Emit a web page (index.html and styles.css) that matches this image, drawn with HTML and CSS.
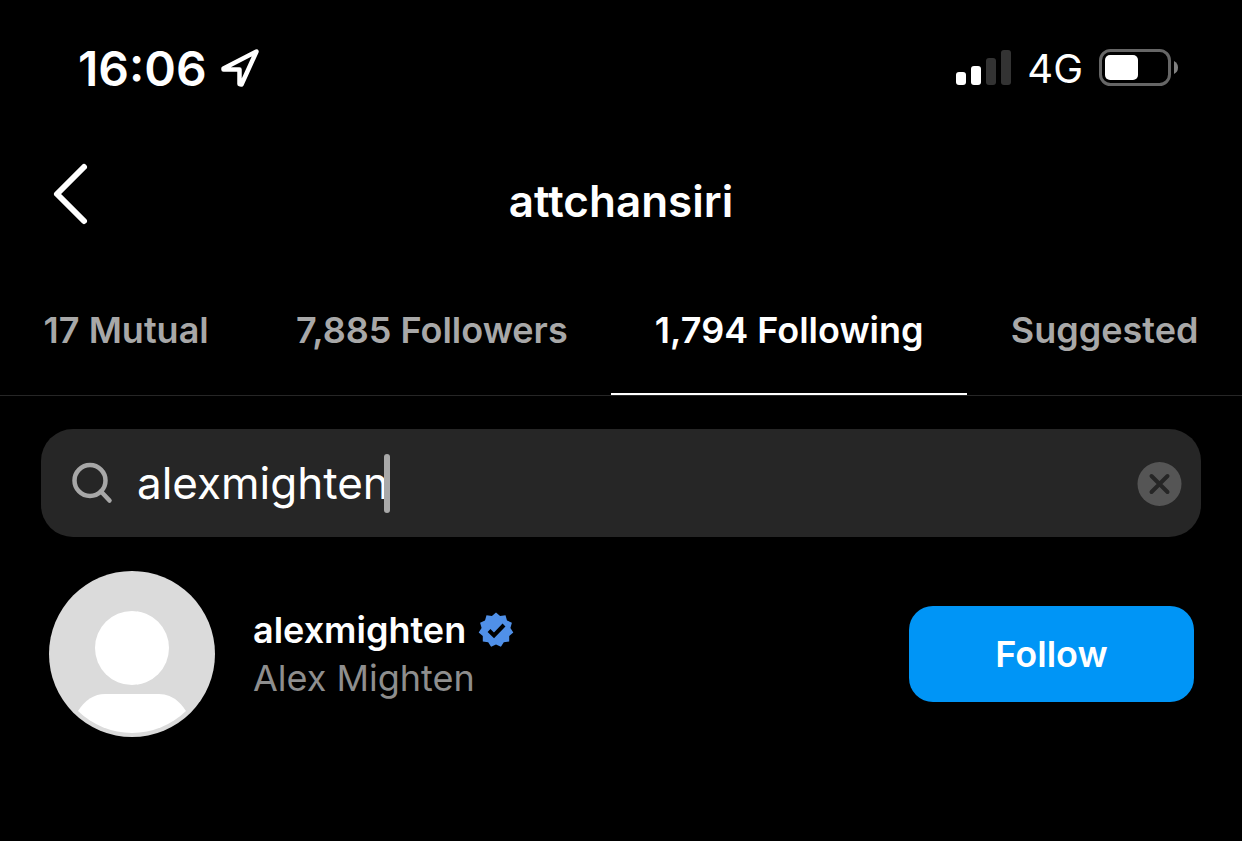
FILE: index.html
```html
<!DOCTYPE html>
<html lang="en">
<head>
    <meta charset="UTF-8">
    <meta name="viewport" content="width=device-width, initial-scale=1.0">
    <title>attchansiri - Following</title>
    <link rel="stylesheet" href="styles.css">
</head>
<body>

<!-- Status bar -->
<div class="status-bar">
    <div class="status-left">
        <span class="time">16:06</span>
        <svg class="location-icon" viewBox="0 0 38 38" aria-hidden="true">
            <path d="M2.5 19.5 35.5 2.5 20.5 35.5 18.5 35 18.5 20.5 2.5 20.5Z"/>
        </svg>
    </div>
    <div class="status-right">
        <svg class="signal-icon" viewBox="0 0 55 36" aria-hidden="true">
            <rect x="0" y="22" width="10" height="13" rx="3"/>
            <rect x="15" y="16" width="10" height="19" rx="3"/>
            <rect class="weak" x="30" y="8" width="10" height="27" rx="3"/>
            <rect class="weak" x="45" y="0" width="10" height="35" rx="3"/>
        </svg>
        <span class="network">4G</span>
        <svg class="battery-icon" viewBox="0 0 80 38" aria-hidden="true">
            <rect class="battery-case" x="1.5" y="1.5" width="69" height="34" rx="10"/>
            <rect x="6" y="6" width="33" height="25" rx="5"/>
            <path class="battery-tip" d="M75 12Q79 14 79 18.500T75 25Z"/>
        </svg>
    </div>
</div>

<!-- Header -->
<header class="header">
    <button class="back-button" type="button" aria-label="Back">
        <svg viewBox="0 0 34 60" aria-hidden="true">
            <path d="M30 3 3 30 30 57"/>
        </svg>
    </button>
    <h1>attchansiri</h1>
</header>

<!-- Tabs -->
<nav class="tabs">
    <a href="#mutual">17 Mutual</a>
    <a href="#followers">7,885 Followers</a>
    <a href="#following" class="active">1,794 Following</a>
    <a href="#suggested">Suggested</a>
</nav>

<main>
    <!-- Search -->
    <form class="search">
        <svg class="search-icon" viewBox="0 0 42 42" aria-hidden="true">
            <circle cx="19" cy="18.500" r="15.500"/>
            <path d="M30 29.500 38.500 38.500"/>
        </svg>
        <div class="search-field">
            <input type="text" value="alexmighten" aria-label="Search" spellcheck="false">
            <span class="caret"></span>
        </div>
        <button class="clear-button" type="button" aria-label="Clear">
            <svg viewBox="0 0 46 46" aria-hidden="true">
                <circle cx="22.500" cy="24" r="22"/>
                <path d="M14.500 16 30.500 32M30.500 16 14.500 32"/>
            </svg>
        </button>
    </form>

    <!-- Results -->
    <ul class="users">
        <li class="user">
            <svg class="avatar" viewBox="0 0 166 166" aria-hidden="true">
                <circle class="avatar-back" cx="83" cy="83" r="83"/>
                <circle cx="83" cy="77" r="37"/>
                <path d="M29 140Q40 123 56 123H110Q126 123 137 140A77.300 77.300 0 0 1 29 140Z"/>
            </svg>
            <div class="user-info">
                <div class="username">
                    <span>alexmighten</span>
                    <svg class="verified-icon" viewBox="0 0 36 36" aria-hidden="true">
                        <path class="badge" d="M18 .5 22.100 4.100 27.500 3.300 29 8.500 33.900 10.700 32.400 15.900 35.300 20.500 31.200 24 31.200 29.500 25.800 30.200 22.900 34.800 18 32.500 13.100 34.800 10.200 30.200 4.800 29.500 4.800 24 .7 20.500 3.600 15.900 2.100 10.700 7 8.500 8.500 3.300 13.900 4.100Z"/>
                        <path class="check" d="M11 18.500 16 23.500 26 13"/>
                    </svg>
                </div>
                <div class="full-name">Alex Mighten</div>
            </div>
            <button class="follow-button" type="button">Follow</button>
        </li>
    </ul>
</main>

</body>
</html>
```
FILE: styles.css
```css
* {
    box-sizing: border-box;
}

body {
    font-family: Inter, "Liberation Sans", sans-serif;
    margin: 0;
    background-color: #000;
    color: #fff;
}

button {
    font-family: inherit;
    border: none;
    padding: 0;
    cursor: pointer;
}

svg {
    display: block;
    flex-shrink: 0;
    fill: #fff;
    overflow: visible;
}

/* Status bar */
.status-bar {
    display: flex;
    justify-content: space-between;
    align-items: center;
    height: 136px;
    padding: 0 63px 0 78px;
}

.status-left,
.status-right {
    display: flex;
    align-items: center;
}

.status-left {
    gap: 14px;
}

.status-right {
    gap: 16px;
}

.time {
    font-size: 48px;
    font-weight: 600;
}

.network {
    font-size: 40px;
}

.location-icon {
    width: 38px;
    height: 38px;
    fill: none;
    stroke: #fff;
    stroke-width: 4.5;
    stroke-linejoin: round;
}

.signal-icon {
    width: 55px;
    height: 36px;
}

.signal-icon .weak {
    fill: #333;
}

.battery-icon {
    width: 80px;
    height: 38px;
}

.battery-icon .battery-case {
    fill: none;
    stroke: #666;
    stroke-width: 3;
}

.battery-icon .battery-tip {
    fill: #808080;
}

/* Header */
.header {
    display: grid;
    grid-template-columns: 1fr auto 1fr;
    align-items: center;
    height: 130px;
    padding: 0 54px;
}

.header h1 {
    margin: 0;
    font-size: 44px;
    font-weight: 600;
}

.back-button {
    justify-self: start;
    align-self: start;
    margin-top: 28px;
    background: none;
}

.back-button svg {
    width: 34px;
    height: 60px;
    fill: none;
    stroke: #fff;
    stroke-width: 6;
    stroke-linecap: round;
    stroke-linejoin: round;
}

/* Tabs */
.tabs {
    display: flex;
    height: 130px;
    border-bottom: 1px solid #262626;
}

.tabs a {
    flex: 1 1 auto;
    line-height: 128px;
    text-align: center;
    color: #a8a8a8;
    font-size: 36px;
    font-weight: 600;
    text-decoration: none;
    white-space: nowrap;
}

.tabs .active {
    color: #fff;
    border-bottom: 2px solid #fff;
}

/* Search */
.search {
    display: flex;
    align-items: center;
    height: 108px;
    margin: 33px 41px 0;
    padding: 0 18px 0 30px;
    background: #262626;
    border-radius: 32px;
}

.search-icon {
    width: 42px;
    height: 42px;
    fill: none;
    stroke: #a8a8a8;
    stroke-width: 4.5;
    stroke-linecap: round;
}

.search-field {
    flex: 1;
    display: flex;
    align-items: center;
    margin-left: 24px;
}

.search-field input {
    field-sizing: content;
    padding: 0;
    border: none;
    outline: none;
    background: none;
    color: #fff;
    font-family: inherit;
    font-size: 44px;
}

.caret {
    width: 6px;
    height: 59px;
    margin-left: -5px;
    border-radius: 3px;
    background: #a8a8a8;
}

.clear-button {
    background: none;
}

.clear-button svg {
    width: 46px;
    height: 46px;
    fill: #555;
}

.clear-button path {
    stroke: #262626;
    stroke-width: 4;
    stroke-linecap: round;
}

/* Results */
.users {
    list-style: none;
    margin: 0;
    padding: 34px 48px 0 49px;
}

.user {
    display: flex;
    align-items: center;
}

.avatar {
    width: 166px;
    height: 166px;
}

.avatar .avatar-back {
    fill: #dbdbdb;
}

.user-info {
    flex: 1;
    margin-left: 38px;
    font-size: 36px;
    line-height: 48px;
}

.username {
    display: flex;
    align-items: center;
    gap: 12px;
    font-weight: 600;
}

.verified-icon {
    width: 36px;
    height: 36px;
}

.verified-icon .badge {
    fill: #5090e8;
}

.verified-icon .check {
    fill: none;
    stroke: #000;
    stroke-width: 4;
}

.full-name {
    color: #8e8e8e;
}

.follow-button {
    width: 285px;
    height: 96px;
    border-radius: 24px;
    background: #0095f6;
    color: #fff;
    font-size: 36px;
    font-weight: 600;
}
```
